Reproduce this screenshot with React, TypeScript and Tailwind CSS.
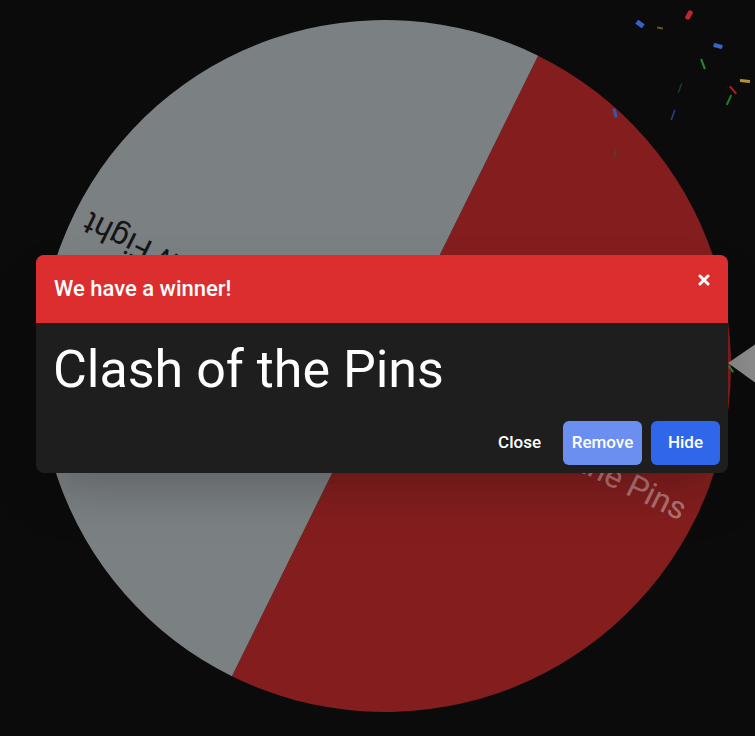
import React from 'react'

const CX = 385
const CY = 366
const R = 346
const SPLIT = -63.74

function polar(deg: number, r: number) {
  const a = (deg * Math.PI) / 180
  return [CX + r * Math.cos(a), CY + r * Math.sin(a)]
}

const segments = [
  { label: 'Clash of the Pins', fill: '#841e1e', text: 'rgba(255,255,255,0.4)', from: SPLIT, to: SPLIT + 180 },
  { label: 'Office Pillow Fight', fill: '#7b8083', text: '#151515', from: SPLIT + 180, to: SPLIT + 360 },
]

const confetti = [
  { x: 689, y: 15, w: 5, h: 10, rot: 30, c: '#c0262b', round: true },
  { x: 640, y: 24, w: 8, h: 5, rot: 35, c: '#3b5fc4' },
  { x: 660, y: 28, w: 6, h: 2, rot: 10, c: '#6a5a1a' },
  { x: 718, y: 46, w: 9, h: 4, rot: 15, c: '#3c63c8' },
  { x: 703, y: 64, w: 2, h: 11, rot: -20, c: '#238a2e' },
  { x: 745, y: 81, w: 10, h: 3, rot: 5, c: '#b8952a' },
  { x: 733, y: 90, w: 2, h: 10, rot: -40, c: '#a3232a' },
  { x: 729, y: 100, w: 2, h: 11, rot: 25, c: '#1f7a2a' },
  { x: 680, y: 88, w: 1.5, h: 10, rot: 20, c: '#1b3f1f' },
  { x: 673, y: 115, w: 1.5, h: 11, rot: 20, c: '#2b3f8a' },
  { x: 615, y: 113, w: 3, h: 9, rot: -15, c: '#3558b8' },
  { x: 615, y: 153, w: 1.5, h: 9, rot: 15, c: '#4a4a1e' },
  { x: 731, y: 369, w: 2, h: 8, rot: -35, c: '#1f8a2e' },
]

function Wheel() {
  return (
    <svg className="absolute inset-0" width={755} height={736} viewBox="0 0 755 736">
      {segments.map((s) => {
        const [x1, y1] = polar(s.from, R)
        const [x2, y2] = polar(s.to, R)
        const mid = (s.from + s.to) / 2
        return (
          <g key={s.label}>
            <path d={`M${CX} ${CY} L${x1} ${y1} A${R} ${R} 0 0 1 ${x2} ${y2} Z`} fill={s.fill} />
            <text
              x={CX + 333}
              y={CY}
              transform={`rotate(${mid} ${CX} ${CY})`}
              textAnchor="end"
              dominantBaseline="middle"
              fontFamily="Roboto, 'Liberation Sans', sans-serif"
              fontSize={32}
              fill={s.text}
            >
              {s.label}
            </text>
          </g>
        )
      })}
      {/* pointer */}
      <polygon points="728,363 760,341 760,386" fill="#8c8c8c" />
      {confetti.map((p, i) => (
        <rect
          key={i}
          x={p.x - p.w / 2}
          y={p.y - p.h / 2}
          width={p.w}
          height={p.h}
          rx={p.round ? p.w / 2 : 0.5}
          fill={p.c}
          transform={`rotate(${p.rot} ${p.x} ${p.y})`}
        />
      ))}
    </svg>
  )
}

function WinnerDialog() {
  return (
    <div className="absolute left-[36px] top-[255px] w-[692px] overflow-hidden rounded-lg bg-[#1e1e1e] shadow-2xl">
      <div className="flex h-[68px] items-start justify-between bg-[#dc2e2e] pl-[18px] pr-[18px]">
        <h2 className="mt-[20px] text-[22px] font-medium leading-[28px] text-white">We have a winner!</h2>
        <button className="mt-[19px] flex h-[12px] w-[12px] items-center justify-center text-white">
          <svg width="12" height="12" viewBox="0 0 12 12">
            <path d="M2 2 L10 10 M10 2 L2 10" stroke="white" strokeWidth="3" strokeLinecap="round" />
          </svg>
        </button>
      </div>
      <div className="px-[17px] pt-[18px]">
        <p className="text-[52px] leading-[58px] text-white">Clash of the Pins</p>
      </div>
      <div className="flex justify-end gap-[6px] px-2 pb-2 pt-[22px]">
        <button className="h-11 rounded-md px-4 text-[17px] font-medium text-white">Close</button>
        <button className="h-11 w-[79px] rounded-md bg-[#6b8ff0] text-[17px] font-medium text-white">Remove</button>
        <button className="ml-[3px] h-11 w-[69px] rounded-md bg-[#2f66ea] text-[17px] font-medium text-white">Hide</button>
      </div>
    </div>
  )
}

export default function App() {
  return (
    <div className="relative h-[736px] w-[755px] overflow-hidden bg-[#0b0b0b] font-['Roboto','Liberation_Sans',sans-serif]">
      <Wheel />
      <WinnerDialog />
    </div>
  )
}
